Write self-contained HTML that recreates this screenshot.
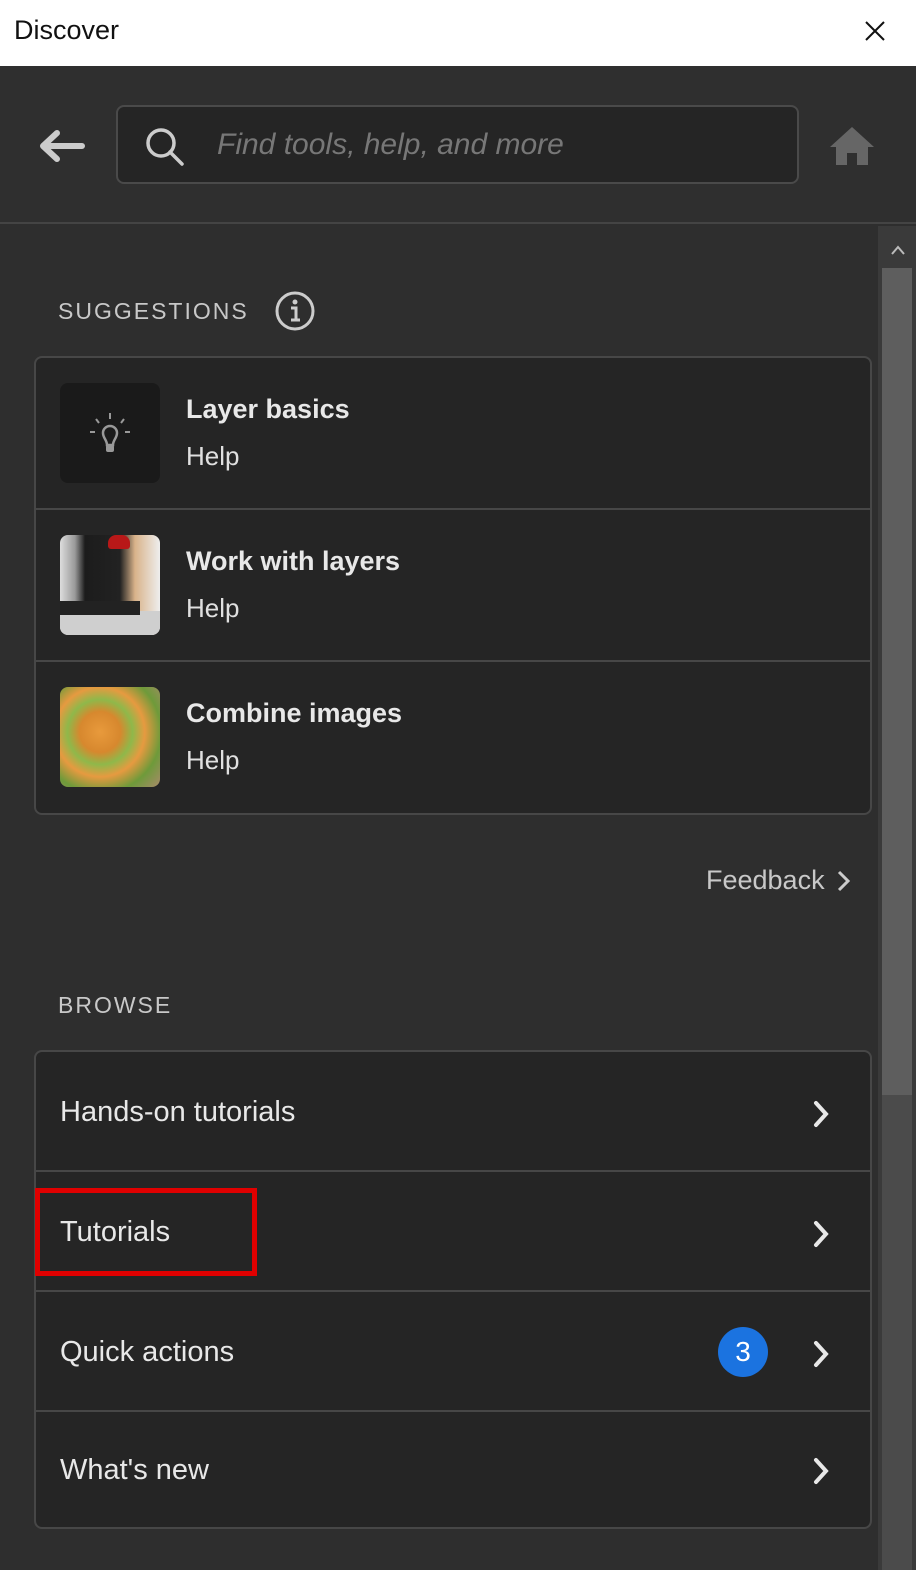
<!DOCTYPE html>
<html><head><meta charset="utf-8"><style>
*{box-sizing:border-box;margin:0;padding:0}
body{width:916px;height:1570px;background:#2e2e2e;font-family:"Liberation Sans",sans-serif;position:relative;overflow:hidden;color:#e6e6e6}
.abs{position:absolute}
.title{left:0;top:0;width:916px;height:66px;background:#fff;color:#111;font-size:27px}
.hdr{left:0;top:66px;width:916px;height:158px;background:#2f2f2f;border-bottom:2px solid #444}
.search{left:116px;top:105px;width:683px;height:79px;border:2px solid #4a4a4a;border-radius:8px;background:#252525}
.card{left:34px;width:838px;border:2px solid #474747;border-radius:8px;background:#252525;overflow:hidden}
.row{position:relative;border-bottom:2px solid #474747}
.row:last-child{border-bottom:none}
.t1{position:absolute;left:150px;font-size:27px;font-weight:bold;color:#e8e8e8}
.t2{position:absolute;left:150px;font-size:26px;color:#e0e0e0}
.thumb{position:absolute;left:24px;width:100px;height:100px;border-radius:8px}
.br{font-size:29px;color:#e8e8e8;position:absolute;left:24px}
.chev{position:absolute;left:776px}
</style></head><body>
<div class="abs title"><span class="abs" style="left:14px;top:15px">Discover</span>
<svg class="abs" style="left:864px;top:20px" width="22" height="22" viewBox="0 0 22 22"><path d="M2 2L20 20M20 2L2 20" stroke="#111" stroke-width="2"/></svg></div>
<div class="abs hdr"></div>
<svg class="abs" style="left:38px;top:128px" width="48" height="36" viewBox="0 0 48 36"><path d="M44 18H6M19 5L5 18L19 31" stroke="#ccc" stroke-width="6" fill="none" stroke-linecap="round" stroke-linejoin="round"/></svg>
<div class="abs search"></div>
<svg class="abs" style="left:144px;top:126px" width="42" height="42" viewBox="0 0 42 42"><circle cx="17" cy="17" r="13" stroke="#ccc" stroke-width="3.5" fill="none"/><path d="M26 26L38 38" stroke="#ccc" stroke-width="3.5" stroke-linecap="round"/></svg>
<div class="abs" style="left:217px;top:128px;font-size:30px;font-style:italic;color:#777">Find tools, help, and more</div>
<svg class="abs" style="left:828px;top:125px" width="48" height="42" viewBox="0 0 48 42"><path d="M24 2L46 22H40V40H29V28H19V40H8V22H2Z" fill="#666"/></svg>
<div class="abs" style="left:878px;top:226px;width:38px;height:1344px;background:#3a3a3a"></div>
<div class="abs" style="left:882px;top:268px;width:30px;height:827px;background:#5e5e5e"></div>
<div class="abs" style="left:882px;top:1095px;width:30px;height:475px;background:#4b4b4b"></div>
<svg class="abs" style="left:890px;top:244px" width="16" height="12" viewBox="0 0 16 12"><path d="M2 10L8 3L14 10" stroke="#bbb" stroke-width="2" fill="none"/></svg>
<div class="abs" style="left:58px;top:298px;font-size:23px;letter-spacing:2px;color:#c8c8c8">SUGGESTIONS</div>
<svg class="abs" style="left:274px;top:290px" width="42" height="42" viewBox="0 0 42 42"><circle cx="21" cy="21" r="18" stroke="#ccc" stroke-width="3" fill="none"/><circle cx="21" cy="12" r="2.5" fill="#ccc"/><path d="M17 18H22V30M17 30H26" stroke="#ccc" stroke-width="3" fill="none"/></svg>
<div class="abs card" style="top:356px;height:459px">
 <div class="row" style="height:152px"><div class="thumb" style="top:25px;background:#1a1a1a"><svg width="100" height="100" viewBox="0 0 100 100"><path d="M50 30V36M36 36L39 40M64 36L61 40M30 49H35M65 49H70" stroke="#999" stroke-width="2"/><path d="M43 50a7 7 0 1 1 14 0c0 5-4 7-4 12H47c0-5-4-7-4-12z" stroke="#999" stroke-width="2.5" fill="none"/><rect x="46" y="62" width="8" height="7" rx="2" fill="#999"/></svg></div>
  <div class="t1" style="top:36px">Layer basics</div><div class="t2" style="top:83px">Help</div></div>
 <div class="row" style="height:152px"><div class="thumb" style="top:25px;background:linear-gradient(90deg,#ddd 0,#999 15%,#1c1c1c 25%,#222 60%,#d9b38a 75%,#eee 100%)"><div style="position:absolute;left:48px;top:0;width:22px;height:14px;background:#b81818;border-radius:8px 8px 3px 3px"></div><div style="position:absolute;left:0;bottom:0;width:100px;height:24px;background:#cfcfcf;border-radius:0 0 8px 8px"></div><div style="position:absolute;left:0;bottom:20px;width:80px;height:14px;background:#222"></div></div>
  <div class="t1" style="top:36px">Work with layers</div><div class="t2" style="top:83px">Help</div></div>
 <div class="row" style="height:151px"><div class="thumb" style="top:25px;background:radial-gradient(circle at 40% 45%,#e89a3c 0,#d7882e 25%,#8fb84a 40%,#e69a40 55%,#6e9a3a 75%,#a88a6a 100%)"></div>
  <div class="t1" style="top:36px">Combine images</div><div class="t2" style="top:83px">Help</div></div>
</div>
<div class="abs" style="left:706px;top:865px;font-size:27px;color:#c8c8c8">Feedback</div>
<svg class="abs" style="left:836px;top:869px" width="16" height="24" viewBox="0 0 16 24"><path d="M3 3L12 12L3 21" stroke="#ccc" stroke-width="3" fill="none"/></svg>
<div class="abs" style="left:58px;top:992px;font-size:23px;letter-spacing:2px;color:#c8c8c8">BROWSE</div>
<div class="abs card" style="top:1050px;height:479px">
 <div class="row" style="height:120px"><div class="br" style="top:44px">Hands-on tutorials</div><svg class="chev" style="top:48px" width="20" height="28" viewBox="0 0 20 28"><path d="M4 3L14 14L4 25" stroke="#e8e8e8" stroke-width="4" fill="none" stroke-linecap="round"/></svg></div>
 <div class="row" style="height:120px"><div class="br" style="top:44px">Tutorials</div><svg class="chev" style="top:48px" width="20" height="28" viewBox="0 0 20 28"><path d="M4 3L14 14L4 25" stroke="#e8e8e8" stroke-width="4" fill="none" stroke-linecap="round"/></svg></div>
 <div class="row" style="height:120px"><div class="br" style="top:44px">Quick actions</div>
  <div style="position:absolute;left:682px;top:35px;width:50px;height:50px;border-radius:50%;background:#1b73e0;color:#fff;font-size:28px;text-align:center;line-height:50px">3</div>
  <svg class="chev" style="top:48px" width="20" height="28" viewBox="0 0 20 28"><path d="M4 3L14 14L4 25" stroke="#e8e8e8" stroke-width="4" fill="none" stroke-linecap="round"/></svg></div>
 <div class="row" style="height:115px"><div class="br" style="top:42px">What's new</div><svg class="chev" style="top:45px" width="20" height="28" viewBox="0 0 20 28"><path d="M4 3L14 14L4 25" stroke="#e8e8e8" stroke-width="4" fill="none" stroke-linecap="round"/></svg></div>
</div>
<div class="abs" style="left:35px;top:1188px;width:222px;height:88px;border:5px solid #e00000"></div>
</body></html>
